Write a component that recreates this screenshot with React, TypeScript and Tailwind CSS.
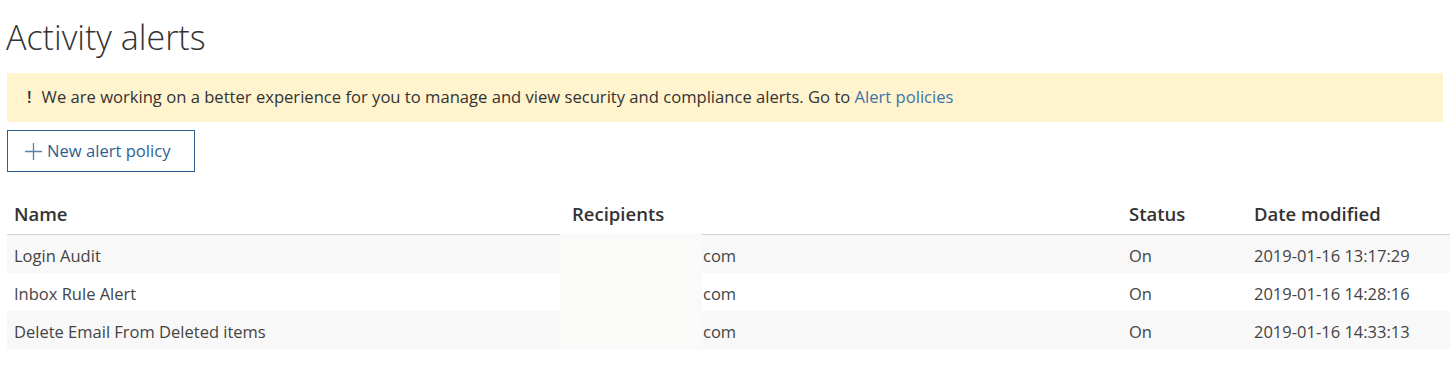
import React from 'react';

const rows = [
  { name: 'Login Audit', status: 'On', date: '2019-01-16 13:17:29' },
  { name: 'Inbox Rule Alert', status: 'On', date: '2019-01-16 14:28:16' },
  { name: 'Delete Email From Deleted items', status: 'On', date: '2019-01-16 14:33:13' },
];

const cols = 'grid grid-cols-[558px_557px_125px_1fr]';

export default function App() {
  return (
    <div
      className="w-[1450px] h-[365px] overflow-hidden bg-white text-[#333333]"
      style={{ fontFamily: '"Open Sans", "Noto Sans", sans-serif' }}
    >
      <h1 className="h-[73px] pl-[6px] pt-[14px] text-[34px] font-light leading-[46px] text-[#333333]">
        Activity alerts
      </h1>

      <div className="ml-[7px] mr-[7px] flex h-[49px] items-center bg-[#fff4ce] pl-[20px] text-[16.6px]">
        <span className="mr-[10px] font-semibold text-[#333333]">!</span>
        <span>
          We are working on a better experience for you to manage and view security and compliance alerts. Go to{' '}
          <a className="text-[#3f73a8]">Alert policies</a>
        </span>
      </div>

      <button className="ml-[7px] mt-[8px] flex h-[42px] w-[188px] items-center border border-[#2b5f8f] pl-[16px] text-[16.6px] text-[#2f5f92]">
        <svg width="19" height="19" viewBox="0 0 19 19" className="mr-[4px]">
          <path d="M9.5 1v17M1 9.5h17" stroke="#5a7fa8" strokeWidth="1.3" fill="none" />
        </svg>
        New alert policy
      </button>

      <div className="relative ml-[7px] mt-[21px]">
        <div className={`${cols} h-[42px] items-center border-b border-[#d4d4d4] text-[18.5px] font-semibold`}>
          <div className="pl-[7px]">Name</div>
          <div className="pl-[7px]">Recipients</div>
          <div className="pl-[7px]">Status</div>
          <div className="pl-[7px]">Date modified</div>
        </div>
        {rows.map((r, i) => (
          <div
            key={r.name}
            className={`${cols} h-[38px] items-center pt-[4px] text-[16.5px] text-[#444444] ${i % 2 === 0 ? 'bg-[#f8f8f8]' : 'bg-white'}`}
          >
            <div className="pl-[7px]">{r.name}</div>
            <div className="pl-[138px]">com</div>
            <div className="pl-[7px]">{r.status}</div>
            <div className="pl-[7px]">{r.date}</div>
          </div>
        ))}
        <div className="absolute left-[553px] top-[40px] h-[117px] w-[142px] bg-[#fafaf8]" />
      </div>
    </div>
  );
}
